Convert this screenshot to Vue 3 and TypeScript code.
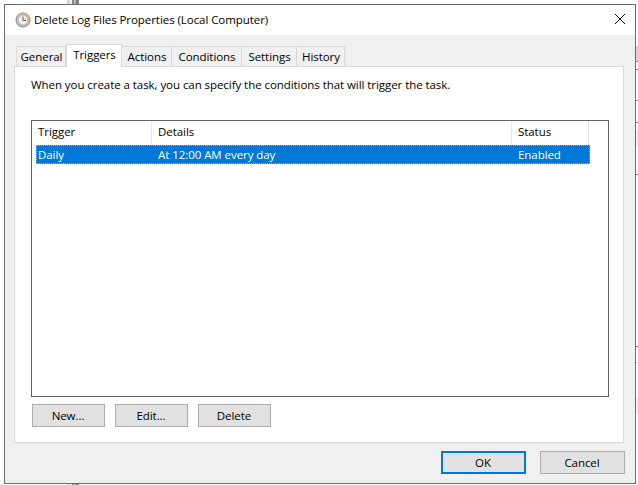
<script setup lang="ts">
const tabs = [
  { label: 'General', width: 50 },
  { label: 'Triggers', width: 56, active: true },
  { label: 'Actions', width: 50 },
  { label: 'Conditions', width: 70 },
  { label: 'Settings', width: 55 },
  { label: 'History', width: 48 },
]
const edgeMarks = [
  { top: 46, height: 15, color: '#d4d4d4' },
  { top: 61, height: 1, color: '#8a8a8a' },
  { top: 69, height: 1, color: '#8a8a8a' },
  { top: 100, height: 1, color: '#9a9a9a' },
  { top: 122, height: 1, color: '#8a8a8a' },
  { top: 130, height: 16, color: '#efefef' },
  { top: 174, height: 1, color: '#777777' },
  { top: 346, height: 1, color: '#777777' },
  { top: 362, height: 1, color: '#d8d8d8' },
  { top: 398, height: 15, color: '#efefef' },
]
</script>

<template>
  <div class="desk">
    <span class="behind behind-top"></span>
    <span class="behind behind-bottom"></span>
    <span
      v-for="mark in edgeMarks"
      :key="mark.top"
      class="edge-mark"
      :style="{ top: mark.top + 'px', height: mark.height + 'px', background: mark.color }"
    ></span>
    <div class="dialog">
      <header class="titlebar">
        <svg class="clock" width="16" height="16" viewBox="0 0 16 16">
          <circle cx="8" cy="8" r="7" fill="#c4c4c1" stroke="#85868a" />
          <path d="M8 1.5A6.5 6.5 0 0 1 14.5 7L8 8Z" fill="#e3b765" />
          <circle cx="8" cy="8" r="4.8" fill="#f1f1ee" stroke="#a9a9a6" stroke-width=".7" />
          <path d="M8 4.5V8.5H11" fill="none" stroke="#55585c" stroke-width="1" />
        </svg>
        <span class="title">Delete Log Files Properties (Local Computer)</span>
        <svg class="close" width="10" height="10" viewBox="0 0 10 10">
          <path d="M0 0l10 10M10 0L0 10" stroke="#111" stroke-width="1" fill="none" />
        </svg>
      </header>
      <div class="body">
        <nav class="tabs">
          <div
            v-for="tab in tabs"
            :key="tab.label"
            class="tab"
            :class="{ active: tab.active }"
            :style="{ width: tab.width + 'px' }"
          >{{ tab.label }}</div>
        </nav>
        <section class="panel">
          <p class="intro">When you create a task, you can specify the conditions that will trigger the task.</p>
          <div class="list">
            <div class="row head">
              <span class="c1">Trigger</span>
              <span class="c2">Details</span>
              <span class="c3">Status</span>
            </div>
            <div class="row selected">
              <span class="c1">Daily</span>
              <span class="c2">At 12:00 AM every day</span>
              <span class="c3">Enabled</span>
            </div>
          </div>
          <div class="actions">
            <button class="btn small">New...</button>
            <button class="btn small">Edit...</button>
            <button class="btn small">Delete</button>
          </div>
        </section>
        <footer class="footer">
          <button class="btn wide primary">OK</button>
          <button class="btn wide">Cancel</button>
        </footer>
      </div>
    </div>
  </div>
</template>

<style>
html, body { margin: 0; background: #fff; }
</style>

<style scoped>
.desk {
  position: relative;
  box-sizing: border-box;
  width: 638px;
  height: 485px;
  padding: 4px 2px 1px 4px;
  overflow: hidden;
  background: #fff;
  font: 11.5px "Open Sans", "Noto Sans", sans-serif;
  letter-spacing: -0.06px;
  color: #000;
}
.behind {
  position: absolute;
  left: 67px;
  width: 12px;
  background: linear-gradient(90deg, #d8d8d8 0 3px, #f4f4f4 3px 5px, #8a8a8a 5px 7px, #b5b5b5 7px 9px, #7d7d7d 9px 12px);
}
.behind-top { top: 0; height: 4px; }
.behind-bottom { bottom: 0; height: 1px; }
.edge-mark { position: absolute; left: 636px; width: 2px; }
.dialog {
  box-sizing: border-box;
  height: 100%;
  border: 1px solid #6d6d6d;
  background: #fff;
  display: flex;
  flex-direction: column;
}
.titlebar { height: 30px; display: flex; align-items: center; padding: 0 10px 0 10px; flex: none; }
.clock { margin-right: 3px; }
.title { flex: 1; margin-bottom: 1px; }
.close { margin-bottom: 2px; }
.body { flex: 1; background: #f0f0f0; padding: 9px 11px 0 9px; display: flex; flex-direction: column; }
.tabs { display: flex; height: 22px; padding-left: 2px; position: relative; z-index: 1; }
.tab {
  box-sizing: border-box;
  height: 20px;
  margin-top: 2px;
  padding-left: 1px;
  border: 1px solid #d9d9d9;
  border-left: 0;
  border-bottom: 0;
  text-align: center;
  line-height: 20px;
  white-space: nowrap;
}
.tab:first-child { border-left: 1px solid #d9d9d9; }
.tab.active { height: 23px; margin-top: 0; background: #fff; border-left: 1px solid #d9d9d9; line-height: 19px; }
.panel {
  box-sizing: border-box;
  height: 377px;
  background: #fff;
  border: 1px solid #d9d9d9;
  padding: 10px 14px 0 16px;
}
.intro { margin: 0; height: 17px; line-height: 16px; white-space: nowrap; }
.list { box-sizing: border-box; height: 277px; margin-top: 26px; border: 1px solid #646464; padding-left: 4px; }
.row { display: flex; width: 553px; }
.head { height: 24px; line-height: 22px; }
.selected { width: 554px; height: 19px; line-height: 19px; background: #0078d7; color: #fff; outline: 1px dotted #e8a04a; outline-offset: -1px; }
.row span { box-sizing: border-box; padding-left: 6px; white-space: nowrap; }
.head span { border-right: 1px solid #e5e5e5; padding-left: 2px; }
.head .c2, .head .c3 { padding-left: 6px; }
.selected .c1 { padding-left: 2px; }
.c1 { width: 116px; }
.c2 { width: 360px; }
.c3 { width: 77px; }
.actions { display: flex; gap: 10px; margin-top: 7px; padding-left: 1px; }
.btn {
  box-sizing: border-box;
  height: 23px;
  border: 1px solid #adadad;
  background: #e1e1e1;
  padding: 0 1px 1px 0;
  font: inherit;
  letter-spacing: inherit;
  color: #000;
}
.small { width: 73px; }
.wide { width: 85px; }
.primary { border: 2px solid #0078d7; }
.footer { display: flex; justify-content: flex-end; gap: 14px; margin: 8px -1px 0 0; }
</style>
